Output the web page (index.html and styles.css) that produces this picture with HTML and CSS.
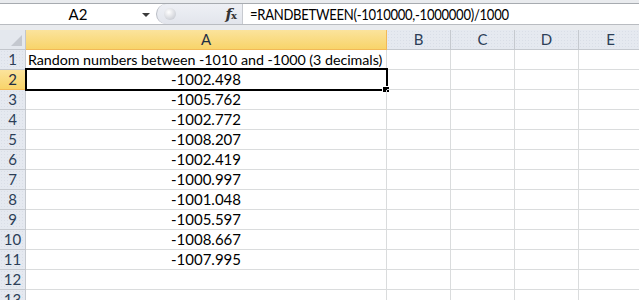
FILE: index.html
```html
<!DOCTYPE html>
<html>
<head>
<meta charset="utf-8">
<link rel="stylesheet" href="styles.css">
</head>
<body>
<div class="app">
  <div class="fbar">
    <div class="namebox">
      <span class="name">A2</span>
      <span class="arrow"></span>
    </div>
    <div class="pill">
      <span class="knob"></span>
      <span class="fx"><i>f</i><small>x</small></span>
    </div>
    <div class="formula"><span class="ftext">=RANDBETWEEN(-1010000,-1000000)/1000</span></div>
  </div>
  <div class="gap"></div>
  <div class="grid">
    <div class="corner"><span class="tri"></span></div>
    <div class="ch sel">A</div>
    <div class="ch">B</div>
    <div class="ch">C</div>
    <div class="ch">D</div>
    <div class="ch">E</div>

    <div class="rh">1</div><div class="c left">Random numbers between -1010 and -1000 (3 decimals)</div><div class="c"></div><div class="c"></div><div class="c"></div><div class="c"></div>
    <div class="rh sel">2</div><div class="c num active">-1002.498<span class="selbox"></span><span class="handle"></span></div><div class="c"></div><div class="c"></div><div class="c"></div><div class="c"></div>
    <div class="rh">3</div><div class="c num">-1005.762</div><div class="c"></div><div class="c"></div><div class="c"></div><div class="c"></div>
    <div class="rh">4</div><div class="c num">-1002.772</div><div class="c"></div><div class="c"></div><div class="c"></div><div class="c"></div>
    <div class="rh">5</div><div class="c num">-1008.207</div><div class="c"></div><div class="c"></div><div class="c"></div><div class="c"></div>
    <div class="rh">6</div><div class="c num">-1002.419</div><div class="c"></div><div class="c"></div><div class="c"></div><div class="c"></div>
    <div class="rh">7</div><div class="c num">-1000.997</div><div class="c"></div><div class="c"></div><div class="c"></div><div class="c"></div>
    <div class="rh">8</div><div class="c num">-1001.048</div><div class="c"></div><div class="c"></div><div class="c"></div><div class="c"></div>
    <div class="rh">9</div><div class="c num">-1005.597</div><div class="c"></div><div class="c"></div><div class="c"></div><div class="c"></div>
    <div class="rh">10</div><div class="c num">-1008.667</div><div class="c"></div><div class="c"></div><div class="c"></div><div class="c"></div>
    <div class="rh">11</div><div class="c num">-1007.995</div><div class="c"></div><div class="c"></div><div class="c"></div><div class="c"></div>
    <div class="rh">12</div><div class="c"></div><div class="c"></div><div class="c"></div><div class="c"></div><div class="c"></div>
    <div class="rh">13</div><div class="c"></div><div class="c"></div><div class="c"></div><div class="c"></div><div class="c"></div>
  </div>
</div>
</body>
</html>
```
FILE: styles.css
```css
html, body {
  margin: 0;
  padding: 0;
  background: #ffffff;
  overflow: hidden;
}
.app {
  width: 639px;
  height: 300px;
  overflow: hidden;
  font-family: Lato, "Open Sans", sans-serif;
  font-size: 15px;
  color: #000;
}
.fbar {
  display: flex;
  height: 25px;
  box-sizing: border-box;
  border-top: 4px solid #e9ebee;
  border-bottom: 1px solid #b9bcc1;
  background: #ffffff;
  position: relative;
}
.fbar::before {
  content: "";
  position: absolute;
  left: 0; right: 0; top: -1px;
  height: 1px;
  background: #a7abb0;
}
.namebox {
  width: 156px;
  display: flex;
  align-items: center;
}
.name {
  flex: 1;
  text-align: center;
  padding-left: 14px;
  font-size: 15px;
  color: #000;
}
.arrow {
  width: 0; height: 0;
  border-left: 4px solid transparent;
  border-right: 4px solid transparent;
  border-top: 4px solid #3b3b3b;
  margin-right: 6px;
  margin-top: 2px;
}
.pill {
  width: 86px;
  background: linear-gradient(#eef0f5, #e2e5ec);
  border-radius: 11px 0 0 11px;
  border-left: 1px solid #b8bcc4;
  display: flex;
  align-items: center;
  justify-content: space-between;
  box-sizing: border-box;
  padding: 0 6px 0 7px;
}
.knob {
  width: 12px; height: 12px;
  border-radius: 50%;
  background: radial-gradient(circle at 40% 35%, #ffffff, #c9ccd3 80%);
}
.fx {
  font-family: "DejaVu Serif", serif;
  font-weight: bold;
  color: #333;
  font-size: 15px;
  letter-spacing: -1px;
}
.fx small { font-size: 10px; }
.formula {
  flex: 1;
  border-left: 1px solid #c7cad0;
  padding-left: 7px;
  display: flex;
  align-items: center;
  white-space: nowrap;
}
.ftext {
  display: inline-block;
  font-size: 14.5px;
  letter-spacing: -0.3px;
  transform: scaleX(0.9);
  transform-origin: left center;
}
.gap {
  height: 5px;
  background: #e9ebee;
}
.grid {
  display: grid;
  grid-template-columns: 26px 361px 64px 64px 64px 64px;
  grid-auto-rows: 20px;
}
.grid > div {
  box-sizing: border-box;
  border-right: 1px solid #dadcdd;
  border-bottom: 1px solid #dadcdd;
  white-space: nowrap;
}
.corner {
  background: #e4e8ee;
  position: relative;
  border-right-color: #c2c6cc !important;
  border-bottom-color: #c2c6cc !important;
}
.tri {
  position: absolute;
  right: 3px; bottom: 3px;
  width: 0; height: 0;
  border-left: 11px solid transparent;
  border-bottom: 11px solid #c4c8cf;
}
.ch, .rh {
  background-color: #e5e9f0;
  background-image: radial-gradient(#d9dee7 0.6px, transparent 0.7px);
  background-size: 3px 3px;
  border-right-color: #c5c9cf !important;
  border-bottom-color: #c5c9cf !important;
  text-align: center;
  line-height: 19px;
  color: #2c3e57;
}
.ch.sel, .rh.sel {
  background: linear-gradient(#fbe39c, #f8d46a);
  border-right-color: #f2b957 !important;
  border-bottom-color: #f2b957 !important;
  color: #1f2f44;
}
.c {
  line-height: 19px;
  position: relative;
}
.c.left {
  padding-left: 2px;
  font-size: 14.3px;
  letter-spacing: -0.05px;
}
.c.num { text-align: center; }
.selbox {
  position: absolute;
  left: -1px; top: -2px;
  width: 363px; height: 23px;
  box-sizing: border-box;
  border: 2px solid #000;
}
.handle {
  position: absolute;
  left: 357px; top: 17px;
  width: 6px; height: 5px;
  background: #000;
  box-shadow: 0 0 0 1px #fff;
}
```
